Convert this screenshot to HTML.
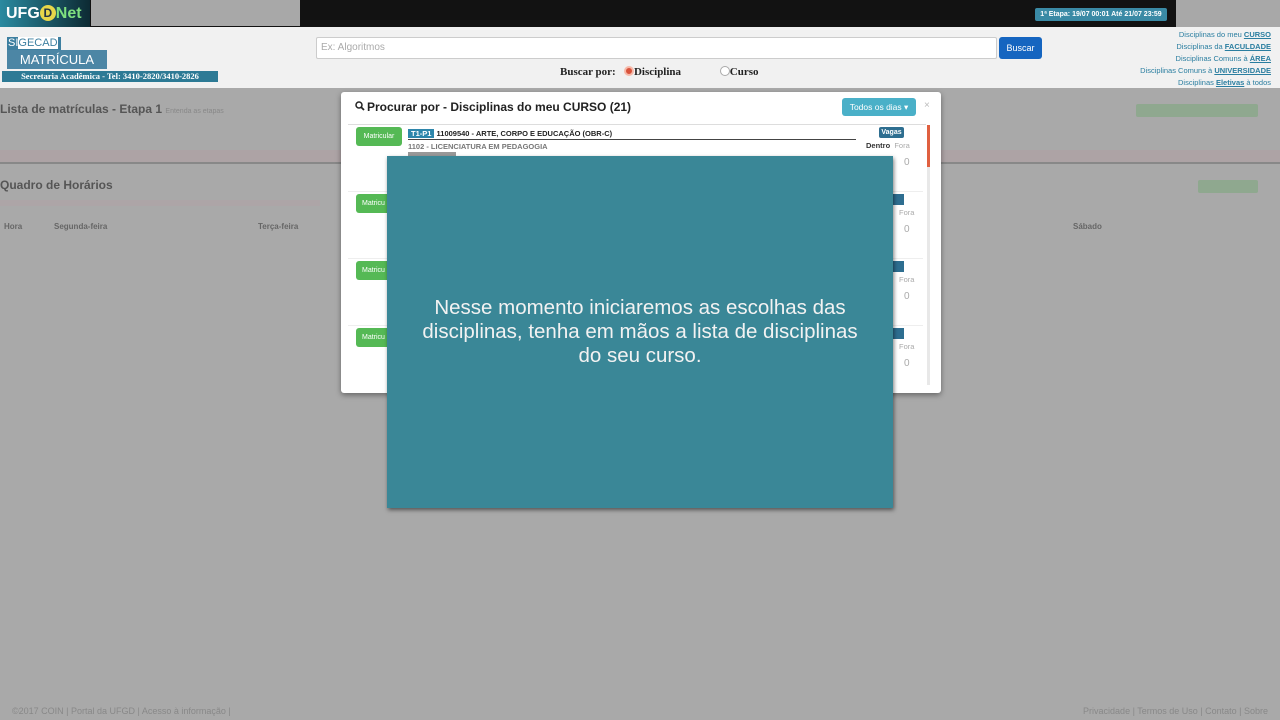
<!DOCTYPE html>
<html style="background:#a9a9a9"><head><meta charset="utf-8"><style>
*{margin:0;padding:0;box-sizing:border-box}
body{width:1280px;height:720px;overflow:hidden;background:#a9a9a9;font-family:"Liberation Sans",sans-serif;position:relative}
.a{position:absolute;white-space:nowrap}
</style></head><body>
<div class="a" style="left:0;top:0;width:1280px;height:720px;background:#a9a9a9"></div>
<div class="a" style="left:0;top:0;width:1280px;height:27px;background:#121212"></div>
<div class="a" style="left:0;top:0;width:90px;height:27px;background:linear-gradient(90deg,#2a8aa0,#0d2a33)"></div>
<div class="a" style="left:6px;top:5px;font-size:16px;font-weight:bold;color:#fff">UFG<span style="display:inline-block;width:16px;height:16px;border-radius:50%;background:#e7d64a;color:#234;font-size:12px;text-align:center;line-height:16px;vertical-align:1px">D</span><span style="color:#7fe07f">Net</span></div>
<div class="a" style="left:91px;top:0;width:209px;height:26px;background:#a8a8a8"></div>
<div class="a" style="left:1176px;top:0;width:104px;height:27px;background:#a8a8a8"></div>
<div class="a" style="left:1035px;top:8px;width:132px;height:13px;background:#3a8aa5;border-radius:2px;color:#fff;font-size:7px;font-weight:bold;line-height:13px;text-align:center">1ª Etapa: 19/07 00:01 Até 21/07 23:59</div>
<div class="a" style="left:0;top:27px;width:1280px;height:61px;background:#f1f1f1"></div>
<div class="a" style="left:7px;top:37px;width:54px;height:13px;background:#3d7fa0;color:#fff;font-size:11px;line-height:13px;padding-left:1px">SI<span style="background:#fff;color:#3d7fa0">GECAD</span></div>
<div class="a" style="left:7px;top:50px;width:100px;height:19px;background:#4c86a5;color:#fff;font-size:13px;line-height:19px;text-align:center">MATRÍCULA</div>
<div class="a" style="left:2px;top:71px;width:216px;height:11px;background:#2d7a95;color:#fff;font-family:'Liberation Serif',serif;font-size:8.5px;font-weight:bold;line-height:11px;text-align:center">Secretaria Acadêmica - Tel: 3410-2820/3410-2826</div>
<div class="a" style="left:316px;top:37px;width:681px;height:22px;background:#fff;border:1px solid #ccc;border-radius:2px;font-size:10px;color:#aaa;line-height:20px;padding-left:4px">Ex: Algoritmos</div>
<div class="a" style="left:999px;top:37px;width:43px;height:22px;background:#1565c0;border-radius:3px;color:#fff;font-size:9px;line-height:22px;text-align:center">Buscar</div>
<div class="a" style="left:560px;top:66px;font-family:'Liberation Serif',serif;font-size:11px;font-weight:bold;color:#222">Buscar por: &nbsp; <span style="display:inline-block;width:10px;height:10px;border-radius:50%;background:#d9533c;border:2px solid #f7b9a9;vertical-align:-1px"></span>Disciplina <span style="display:inline-block;width:10px;height:10px;border-radius:50%;border:1px solid #aaa;vertical-align:-1px;margin-left:36px;background:#fff"></span>Curso</div>
<div class="a" style="right:9px;top:29px;text-align:right;font-size:7.5px;color:#2a7ea0;line-height:12px">Disciplinas do meu <b><u>CURSO</u></b><br>Disciplinas da <b><u>FACULDADE</u></b><br>Disciplinas Comuns à <b><u>ÁREA</u></b><br>Disciplinas Comuns à <b><u>UNIVERSIDADE</u></b><br>Disciplinas <b><u>Eletivas</u></b> à todos</div>
<div class="a" style="left:0;top:102px;font-size:12px;font-weight:bold;color:#555">Lista de matrículas - Etapa 1 <span style="font-size:7px;font-weight:normal;color:#888">Entenda as etapas</span></div>
<div class="a" style="left:1136px;top:104px;width:122px;height:13px;background:#8fa88f;border-radius:2px"></div>
<div class="a" style="left:0;top:150px;width:1280px;height:14px;background:#ada3a5;border-bottom:2px solid #888"></div>
<div class="a" style="left:0;top:178px;font-size:12px;font-weight:bold;color:#555">Quadro de Horários</div>
<div class="a" style="left:1198px;top:180px;width:60px;height:13px;background:#8fa88f;border-radius:2px"></div>
<div class="a" style="left:0;top:200px;width:320px;height:6px;background:#ada5a7"></div>
<div class="a" style="left:4px;top:222px;font-size:8px;font-weight:bold;color:#666">Hora</div>
<div class="a" style="left:54px;top:222px;font-size:8px;font-weight:bold;color:#666">Segunda-feira</div>
<div class="a" style="left:258px;top:222px;font-size:8px;font-weight:bold;color:#666">Terça-feira</div>
<div class="a" style="left:1073px;top:222px;font-size:8px;font-weight:bold;color:#666">Sábado</div>
<div class="a" style="left:12px;top:706px;font-size:9px;color:#888">©2017 COIN | Portal da UFGD | Acesso à informação |</div>
<div class="a" style="right:12px;top:706px;font-size:9px;color:#888">Privacidade | Termos de Uso | Contato | Sobre</div>
<!-- modal -->
<div class="a" style="left:341px;top:92px;width:600px;height:301px;background:#fff;border-radius:3px;box-shadow:0 2px 6px rgba(0,0,0,.4)"></div>
<svg class="a" style="left:355px;top:101px" width="10" height="10" viewBox="0 0 10 10"><circle cx="4" cy="4" r="3" fill="none" stroke="#222" stroke-width="1.5"/><path d="M6 6L9 9" stroke="#222" stroke-width="1.8"/></svg>
<div class="a" style="left:367px;top:100px;font-size:12px;font-weight:bold;color:#222">Procurar por - Disciplinas do meu CURSO (21)</div>
<div class="a" style="left:842px;top:98px;width:74px;height:18px;background:#4ab0c8;border-radius:3px;color:#fff;font-size:8.5px;line-height:18px;text-align:center">Todos os dias ▾</div>
<div class="a" style="left:924px;top:100px;font-size:10px;color:#bbb">×</div>
<div class="a" style="left:348px;top:124px;width:578px;height:1px;background:#ddd"></div>
<div class="a" style="left:927px;top:125px;width:3px;height:260px;background:#e8e8e8"></div>
<div class="a" style="left:927px;top:125px;width:3px;height:42px;background:#e06040"></div>
<div class="a" style="left:356px;top:127px;width:46px;height:19px;background:#55b955;border-radius:3px;color:#fff;font-size:7px;line-height:19px;text-align:center">Matricular</div>
<div class="a" style="left:356px;top:194px;width:46px;height:19px;background:#55b955;border-radius:3px;color:#fff;font-size:7px;line-height:19px;padding-left:6px">Matricu</div>
<div class="a" style="left:356px;top:261px;width:46px;height:19px;background:#55b955;border-radius:3px;color:#fff;font-size:7px;line-height:19px;padding-left:6px">Matricu</div>
<div class="a" style="left:356px;top:328px;width:46px;height:19px;background:#55b955;border-radius:3px;color:#fff;font-size:7px;line-height:19px;padding-left:6px">Matricu</div>
<div class="a" style="left:408px;top:128px;width:448px;height:12px;border-bottom:1px solid #444;font-size:7.5px;font-weight:bold;color:#222;line-height:11px"><span style="background:#2e86ab;color:#fff;padding:0 3px">T1-P1</span> 11009540 - ARTE, CORPO E EDUCAÇÃO (OBR-C)</div>
<div class="a" style="left:408px;top:142px;font-size:7.5px;font-weight:bold;color:#777">1102 - LICENCIATURA EM PEDAGOGIA</div>
<div class="a" style="left:408px;top:152px;width:48px;height:5px;background:#999"></div>
<div class="a" style="left:879px;top:127px;width:25px;height:11px;background:#2e6e90;border-radius:2px;color:#fff;font-size:7px;font-weight:bold;line-height:11px;text-align:center">Vagas</div>
<div class="a" style="left:866px;top:141px;font-size:7.5px;font-weight:bold;color:#333">Dentro <span style="color:#aaa;font-weight:normal">&nbsp;Fora</span></div>
<div class="a" style="left:904px;top:157px;font-size:10px;color:#aaa">0</div>
<div class="a" style="left:893px;top:194px;width:11px;height:11px;background:#2e6e90"></div>
<div class="a" style="left:899px;top:208px;font-size:7.5px;color:#aaa">Fora</div>
<div class="a" style="left:904px;top:224px;font-size:10px;color:#aaa">0</div>
<div class="a" style="left:893px;top:261px;width:11px;height:11px;background:#2e6e90"></div>
<div class="a" style="left:899px;top:275px;font-size:7.5px;color:#aaa">Fora</div>
<div class="a" style="left:904px;top:291px;font-size:10px;color:#aaa">0</div>
<div class="a" style="left:893px;top:328px;width:11px;height:11px;background:#2e6e90"></div>
<div class="a" style="left:899px;top:342px;font-size:7.5px;color:#aaa">Fora</div>
<div class="a" style="left:904px;top:358px;font-size:10px;color:#aaa">0</div>
<div class="a" style="left:348px;top:191px;width:575px;height:1px;background:#eee"></div>
<div class="a" style="left:348px;top:258px;width:575px;height:1px;background:#eee"></div>
<div class="a" style="left:348px;top:325px;width:575px;height:1px;background:#eee"></div>
<!-- teal overlay -->
<div class="a" style="left:387px;top:156px;width:506px;height:352px;background:#3a8797;box-shadow:1px 2px 4px rgba(0,0,0,.5)"></div>
<div class="a" style="left:387px;top:296px;width:506px;text-align:center;font-size:20.5px;line-height:24px;color:#f2f2f2">Nesse momento iniciaremos as escolhas das<br>disciplinas, tenha em mãos a lista de disciplinas<br>do seu curso.</div>
</body></html>
